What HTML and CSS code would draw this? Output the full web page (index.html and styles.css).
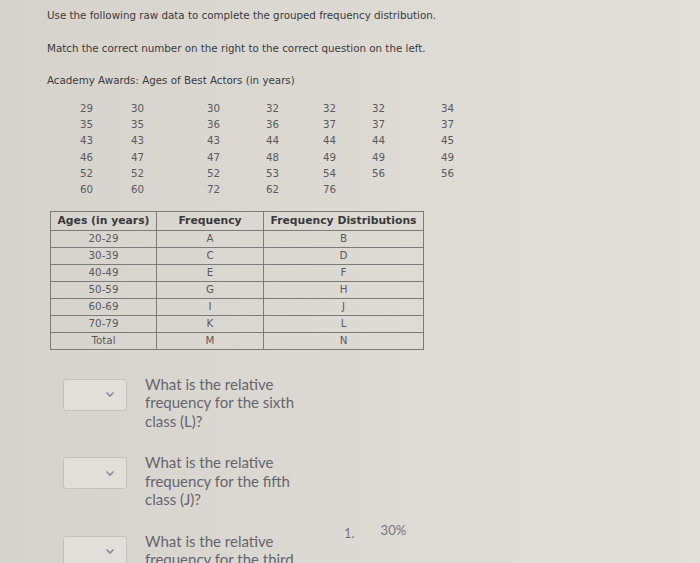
FILE: index.html
```html
<!DOCTYPE html>
<html>
<head>
<meta charset="utf-8">
<link rel="stylesheet" href="styles.css">
</head>
<body>
<div class="page">
  <p class="instr first">Use the following raw data to complete the grouped frequency distribution.</p>
  <p class="instr">Match the correct number on the right to the correct question on the left.</p>
  <p class="instr">Academy Awards: Ages of Best Actors (in years)</p>

  <div class="data">
    <span>29</span><span>30</span><span>30</span><span>32</span><span>32</span><span>32</span><span>34</span>
    <span>35</span><span>35</span><span>36</span><span>36</span><span>37</span><span>37</span><span>37</span>
    <span>43</span><span>43</span><span>43</span><span>44</span><span>44</span><span>44</span><span>45</span>
    <span>46</span><span>47</span><span>47</span><span>48</span><span>49</span><span>49</span><span>49</span>
    <span>52</span><span>52</span><span>52</span><span>53</span><span>54</span><span>56</span><span>56</span>
    <span>60</span><span>60</span><span>72</span><span>62</span><span>76</span><span></span><span></span>
  </div>

  <table class="freq">
    <tr><th class="c1">Ages (in years)</th><th class="c2">Frequency</th><th class="c3">Frequency Distributions</th></tr>
    <tr><td>20-29</td><td>A</td><td>B</td></tr>
    <tr><td>30-39</td><td>C</td><td>D</td></tr>
    <tr><td>40-49</td><td>E</td><td>F</td></tr>
    <tr><td>50-59</td><td>G</td><td>H</td></tr>
    <tr><td>60-69</td><td>I</td><td>J</td></tr>
    <tr><td>70-79</td><td>K</td><td>L</td></tr>
    <tr><td>Total</td><td>M</td><td>N</td></tr>
  </table>

  <div class="match">
    <div class="questions">
      <div class="q">
        <div class="select"><svg width="10" height="7" viewBox="0 0 10 7"><path d="M1.5 1.5 L5 5 L8.5 1.5" fill="none" stroke="#8a8aa0" stroke-width="1.6"/></svg></div>
        <div class="qtext">What is the relative frequency for the sixth class (L)?</div>
      </div>
      <div class="q">
        <div class="select"><svg width="10" height="7" viewBox="0 0 10 7"><path d="M1.5 1.5 L5 5 L8.5 1.5" fill="none" stroke="#8a8aa0" stroke-width="1.6"/></svg></div>
        <div class="qtext">What is the relative frequency for the fifth class (J)?</div>
      </div>
      <div class="q">
        <div class="select"><svg width="10" height="7" viewBox="0 0 10 7"><path d="M1.5 1.5 L5 5 L8.5 1.5" fill="none" stroke="#8a8aa0" stroke-width="1.6"/></svg></div>
        <div class="qtext">What is the relative frequency for the third class (F)?</div>
      </div>
    </div>
    <div class="answers">
      <div class="ans"><span class="num">1.</span><span class="val">30%</span></div>
    </div>
  </div>
</div>
</body>
</html>
```
FILE: styles.css
```css
html, body {
  margin: 0;
  padding: 0;
  height: 563px;
  overflow: hidden;
}
body {
  background: linear-gradient(90deg, #d6d3cc 0%, #dcd9d2 45%, #e2dfd8 100%);
  font-family: "DejaVu Sans", Verdana, sans-serif;
  color: #3e3e40;
}
.page {
  padding-left: 47px;
  padding-top: 8px;
}
.instr {
  margin: 0 0 18.5px 0;
  font-size: 10.3px;
  line-height: 14px;
  color: #3a3a3e;
}
.data {
  display: grid;
  grid-template-columns: 51px 76px 59px 57px 49px 69px 30px;
  grid-auto-rows: 16.4px;
  margin: -6px 0 0 33px;
  font-size: 10.3px;
  line-height: 16px;
  color: #5a5a5e;
}
.freq {
  margin: 13px 0 0 3px;
  border-collapse: collapse;
  font-size: 10.3px;
  color: #5a5a5e;
}
.freq th, .freq td {
  border: 1px solid #7c7b78;
  text-align: center;
  padding: 0;
  height: 16px;
  line-height: 15px;
}
.freq th {
  color: #3a3a3e;
  font-weight: bold;
  font-size: 10.8px;
  height: 18px;
}
.freq .c1 { width: 105px; }
.freq .c2 { width: 106px; }
.freq .c3 { width: 159px; }
.match {
  display: flex;
  margin-top: 29px;
  margin-left: 16px;
}
.questions {
  display: flex;
  flex-direction: column;
  gap: 27px;
  width: 281px;
}
.q {
  display: flex;
  gap: 18px;
  align-items: flex-start;
}
.select {
  width: 64px;
  height: 32px;
  border: 1px solid #c4c2bd;
  border-radius: 3px;
  background: #e2dfd9;
  display: flex;
  align-items: center;
  justify-content: flex-end;
  padding-right: 11px;
  box-sizing: border-box;
  flex: none;
}
.qtext {
  font-family: Lato, "Open Sans", sans-serif;
  font-size: 15px;
  line-height: 18.5px;
  color: #65656f;
  width: 160px;
  margin-top: -4px;
}
.answers {
  padding-top: 143px;
}
.ans {
  display: flex;
  gap: 26px;
  font-family: Lato, "Open Sans", sans-serif;
  font-size: 13px;
  color: #77767f;
}
.ans .num { margin-top: 3px; }
```
